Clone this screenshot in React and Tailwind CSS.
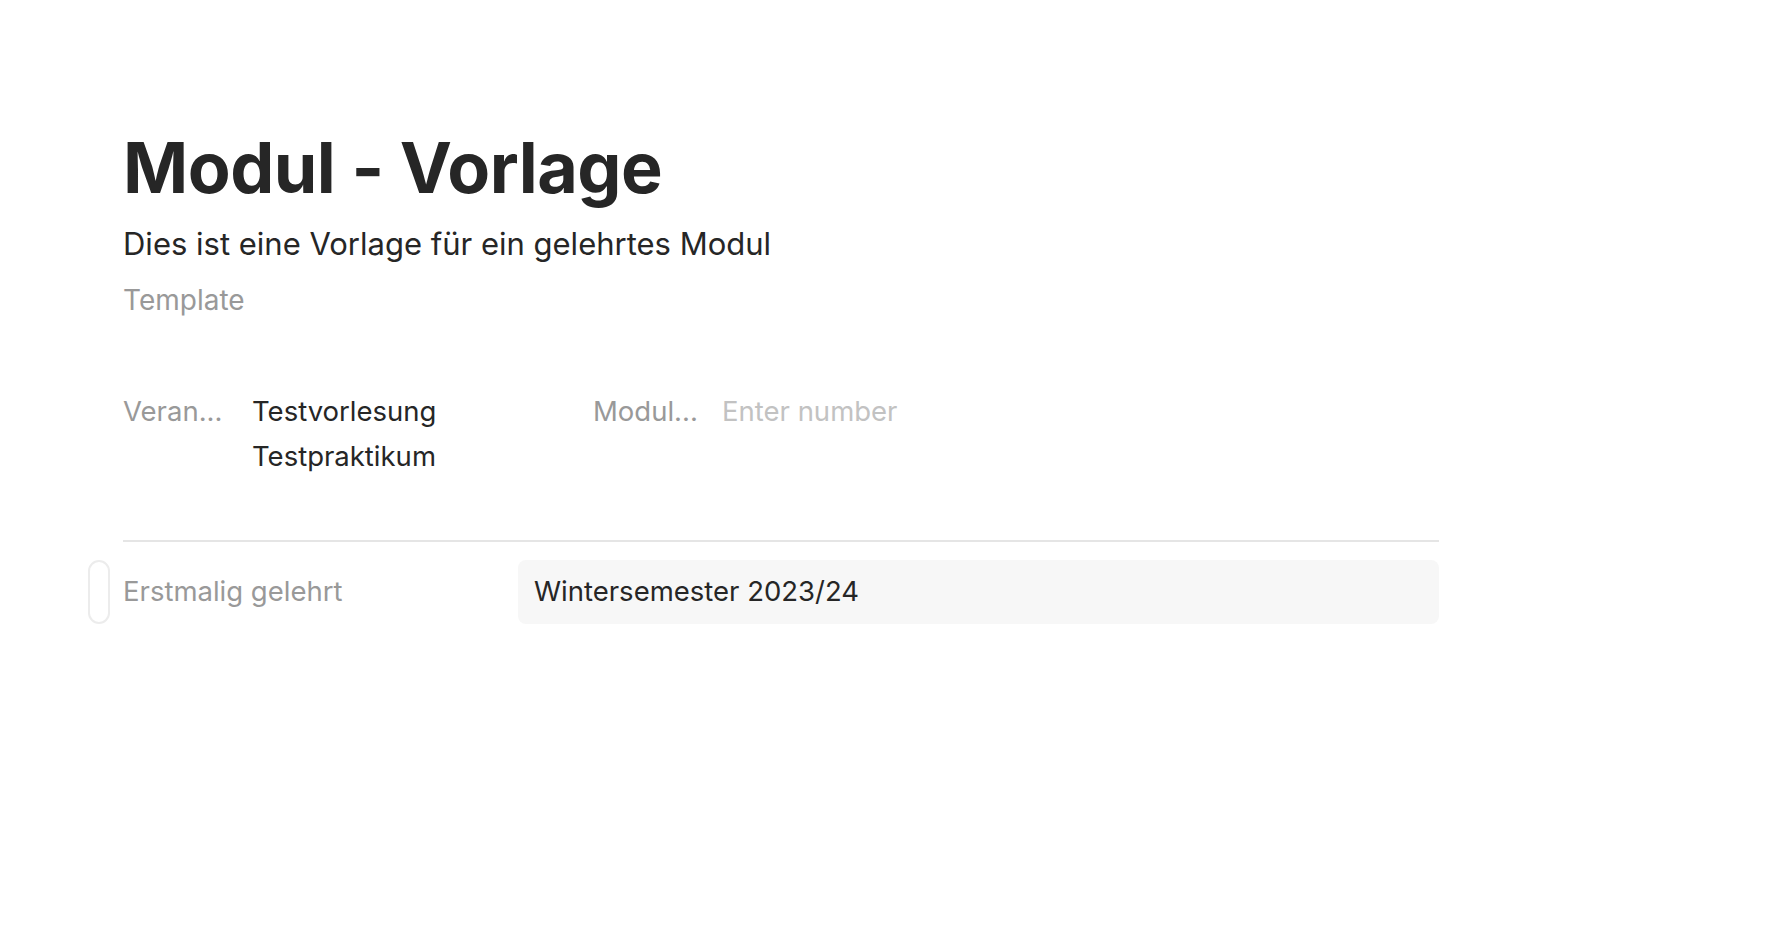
export default function App() {
  return (
    <div className="min-h-screen bg-white text-[#262626]" style={{ fontFamily: 'Inter, "Noto Sans", sans-serif' }}>
      <div className="w-[1316px] ml-[123px] pt-[126px]">
        <h1 className="text-[70px] leading-[84px] font-bold tracking-[-0.5px]">Modul - Vorlage</h1>
        <p className="text-[31px] leading-[40px] mt-[14px]">Dies ist eine Vorlage für ein gelehrtes Modul</p>
        <p className="text-[28px] leading-[40px] mt-[16px] text-[#999]">Template</p>

        <div className="flex mt-[69px] text-[27.5px] leading-[45px]">
          <div className="flex w-[470px]">
            <div className="w-[129px] text-[#999]">Veran...</div>
            <div className="flex flex-col">
              <span>Testvorlesung</span>
              <span>Testpraktikum</span>
            </div>
          </div>
          <div className="flex">
            <div className="w-[129px] text-[#999]">Modul...</div>
            <div className="text-[#c2c2c2]">Enter number</div>
          </div>
        </div>

        <div className="h-[2px] bg-[#e5e5e5] mt-[61px]" />

        <div className="relative flex items-center mt-[18px] h-[64px] text-[27.5px]">
          <div className="absolute left-[-35px] top-0 h-[64px] w-[22px] rounded-full border-2 border-[#ececec]" />
          <div className="w-[395px] text-[#999]">Erstmalig gelehrt</div>
          <div className="flex-1 h-full flex items-center bg-[#f7f7f7] rounded-[8px] px-[16px]">Wintersemester 2023/24</div>
        </div>
      </div>
    </div>
  );
}
